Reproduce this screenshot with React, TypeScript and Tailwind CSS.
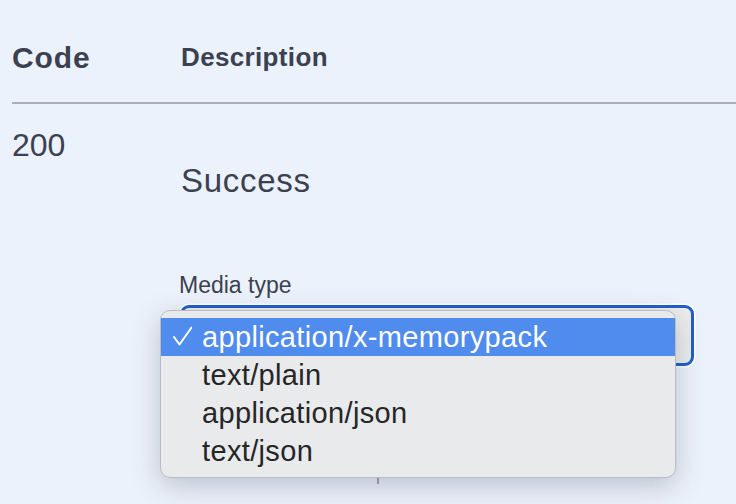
const mediaTypes = ['application/x-memorypack', 'text/plain', 'application/json', 'text/json'];

function CheckMark() {
  return (
    <svg width="20" height="20" viewBox="0 0 20 20" className="absolute left-[11px] top-[8px]">
      <path d="M2 11 L7.5 18.5 L19.5 1.5" fill="none" stroke="white" strokeWidth="2" strokeLinecap="round" strokeLinejoin="round" />
    </svg>
  );
}

export default function App() {
  const selected = 0;

  return (
    <div className="relative w-[736px] h-[504px] overflow-hidden bg-[#ecf2fb] text-[#3b4151] font-['Liberation_Sans',Arial,sans-serif]">
      {/* table head */}
      <div className="ml-[12px] flex border-b-2 border-[#a9aeb9] pt-[43px] pb-[29px]">
        <div className="w-[169px] text-[30px] leading-[30px] font-bold tracking-[0.9px]">Code</div>
        <div className="mt-[1px] text-[26px] leading-[26px] font-bold tracking-[0.35px]">Description</div>
      </div>

      {/* response row */}
      <div className="ml-[12px] flex pt-[25px]">
        <div className="w-[169px] text-[32px] leading-[32px]">200</div>
        <div className="flex flex-col">
          <div className="mt-[35px] text-[33px] leading-[33px] tracking-[0.7px]">Success</div>
          <div className="mt-[77px] -ml-[2px] text-[23px] leading-[23px]">Media type</div>
          <div className="mt-[8px] -ml-[1px] h-[61px] w-[514px] rounded-[9px] border-[3px] border-[#1f5fc8] bg-[#ececec] shadow-[0_0_0_1.5px_#ffffff]" />
          <div className="ml-[196px] mt-[90px] h-[28px] border-l-2 border-[#a0a4ae]" />
        </div>
      </div>

      {/* open native select menu */}
      <div className="absolute left-[160px] top-[310px] w-[516px] rounded-[10px] border border-[#b9bcc2] bg-[#e9eaec] py-[7px] shadow-[0_8px_28px_rgba(60,70,90,0.28)]">
        {mediaTypes.map((type, i) => (
          <div
            key={type}
            className={
              i === selected
                ? 'relative h-[38px] bg-[#508bee] pl-[41px] text-[29px] leading-[38px] tracking-[0.35px] text-white'
                : 'relative h-[38px] pl-[41px] text-[29px] leading-[38px] tracking-[0.35px] text-[#262626]'
            }
          >
            {i === selected && <CheckMark />}
            {type}
          </div>
        ))}
      </div>
    </div>
  );
}
